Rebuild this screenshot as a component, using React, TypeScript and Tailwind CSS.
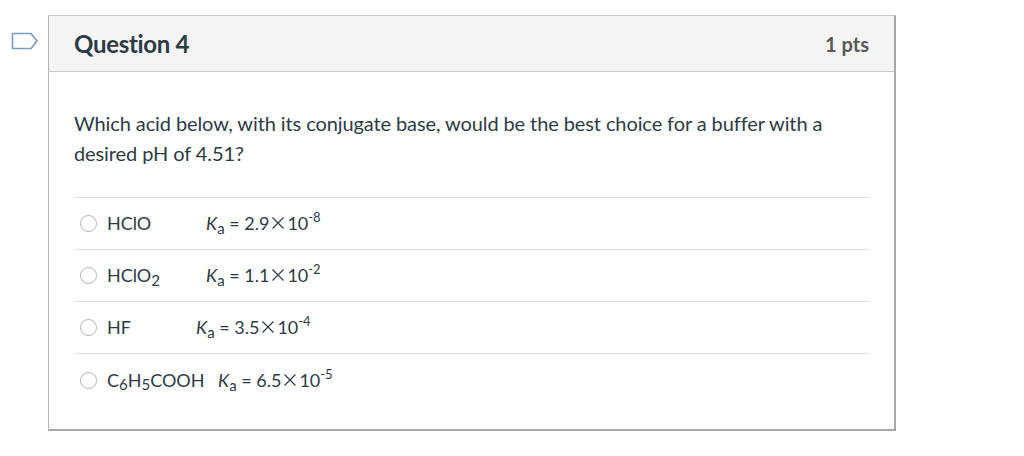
import React from "react";

const rows = [
  { label: <>HClO</>, w: "w-[99px]", exp: "-8", mant: "2.9" },
  { label: <>HClO<sub className="text-[15px] top-[4px]">2</sub></>, w: "w-[99px]", exp: "-2", mant: "1.1" },
  { label: <>HF</>, w: "w-[89px]", exp: "-4", mant: "3.5" },
  {
    label: (
      <>C<sub className="text-[15px] top-[3px]">6</sub>H<sub className="text-[15px] top-[3px]">5</sub>COOH</>
    ),
    w: "w-[111px]",
    exp: "-5",
    mant: "6.5",
  },
];

function Times() {
  return (
    <svg className="inline-block mx-[2px] align-baseline" width="14" height="14" viewBox="0 0 14 14">
      <path d="M1.5 1.5 L12.5 12.5 M12.5 1.5 L1.5 12.5" stroke="#2d3b45" strokeWidth="1.2" fill="none" />
    </svg>
  );
}

export default function App() {
  return (
    <div className="w-[1024px] h-[456px] bg-white relative" style={{ fontFamily: "Lato, 'Liberation Sans', sans-serif" }}>
      <svg className="absolute left-[11px] top-[32px]" width="28" height="18" viewBox="0 0 28 18">
        <path d="M1.5 1.5 H20 L26 9 L20 16.5 H1.5 Z" fill="none" stroke="#7d9bbd" strokeWidth="1.6" strokeLinejoin="round" />
      </svg>
      <div className="absolute left-[48px] top-[15px] w-[848px] h-[416px] border border-[#c7cdd1] border-l-[#b5b5b5] border-b-2 border-r-2 border-b-[#a8a8a8] border-r-[#a8a8a8] flex flex-col">
        <div className="h-[56px] bg-[#f5f5f5] border-b border-[#c7cdd1] flex items-center justify-between px-[25px]">
          <div className="text-[24px] font-bold text-[#2d3b45] tracking-[-0.3px]">Question 4</div>
          <div className="text-[20px] font-bold text-[#595959]">1 pts</div>
        </div>
        <div className="px-[25px] pt-[36px]">
          <p className="text-[20px] leading-[30px] text-[#2d3b45] tracking-[-0.1px]">
            Which acid below, with its conjugate base, would be the best choice for a buffer with a
            <br />
            desired pH of 4.51?
          </p>
          <div className="mt-[29px] border-t border-[#dedede] w-[796px]">
            {rows.map((r, i) => (
              <div key={i} className="h-[52px] border-b border-[#dedede] flex items-center text-[18px] text-[#2d3b45] last:border-b-0">
                <span className="ml-[6px] w-[17px] h-[17px] rounded-full border border-[#b3b3b3] bg-white shrink-0" />
                <span className={`ml-[10px] ${r.w} shrink-0`}>{r.label}</span>
                <span className="whitespace-nowrap">
                  <i>K</i>
                  <sub className="text-[15px] top-[4px]">a</sub> = {r.mant}
                  <Times />10
                  <sup className="text-[13px] top-[-8px]">{r.exp}</sup>
                </span>
              </div>
            ))}
          </div>
        </div>
      </div>
    </div>
  );
}
